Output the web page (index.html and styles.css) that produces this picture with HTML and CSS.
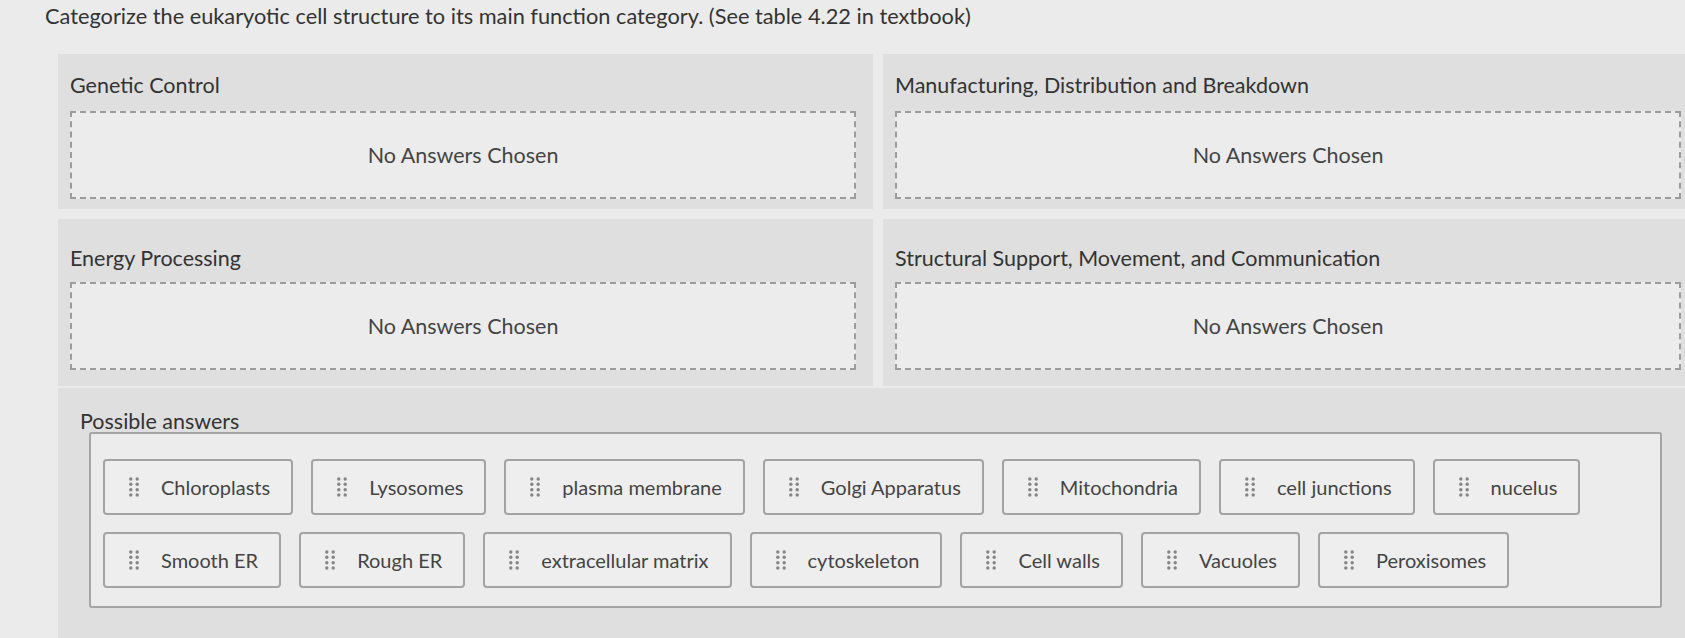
FILE: index.html
```html
<!DOCTYPE html>
<html lang="en">
<head>
<meta charset="utf-8">
<title>Categorize</title>
<link rel="stylesheet" href="styles.css">
</head>
<body>
<div class="page">
  <h1 class="title">Categorize the eukaryotic cell structure to its main function category. (See table 4.22 in textbook)</h1>
  <div class="grid">
    <section class="panel">
      <div class="panel-label">Genetic Control</div>
      <div class="dropzone">No Answers Chosen</div>
    </section>
    <section class="panel">
      <div class="panel-label">Manufacturing, Distribution and Breakdown</div>
      <div class="dropzone">No Answers Chosen</div>
    </section>
    <section class="panel panel-low">
      <div class="panel-label">Energy Processing</div>
      <div class="dropzone">No Answers Chosen</div>
    </section>
    <section class="panel panel-low">
      <div class="panel-label">Structural Support, Movement, and Communication</div>
      <div class="dropzone">No Answers Chosen</div>
    </section>
    <section class="answers">
      <div class="answers-label">Possible answers</div>
      <div class="answers-box">
        <div class="chip"><svg class="grip" viewBox="0 0 10 20"><g fill="#858585"><circle cx="1.8" cy="2" r="1.7"/><circle cx="8.2" cy="2" r="1.7"/><circle cx="1.8" cy="7.3" r="1.7"/><circle cx="8.2" cy="7.3" r="1.7"/><circle cx="1.8" cy="12.7" r="1.7"/><circle cx="8.2" cy="12.7" r="1.7"/><circle cx="1.8" cy="18" r="1.7"/><circle cx="8.2" cy="18" r="1.7"/></g></svg>Chloroplasts</div>
        <div class="chip"><svg class="grip" viewBox="0 0 10 20"><g fill="#858585"><circle cx="1.8" cy="2" r="1.7"/><circle cx="8.2" cy="2" r="1.7"/><circle cx="1.8" cy="7.3" r="1.7"/><circle cx="8.2" cy="7.3" r="1.7"/><circle cx="1.8" cy="12.7" r="1.7"/><circle cx="8.2" cy="12.7" r="1.7"/><circle cx="1.8" cy="18" r="1.7"/><circle cx="8.2" cy="18" r="1.7"/></g></svg>Lysosomes</div>
        <div class="chip"><svg class="grip" viewBox="0 0 10 20"><g fill="#858585"><circle cx="1.8" cy="2" r="1.7"/><circle cx="8.2" cy="2" r="1.7"/><circle cx="1.8" cy="7.3" r="1.7"/><circle cx="8.2" cy="7.3" r="1.7"/><circle cx="1.8" cy="12.7" r="1.7"/><circle cx="8.2" cy="12.7" r="1.7"/><circle cx="1.8" cy="18" r="1.7"/><circle cx="8.2" cy="18" r="1.7"/></g></svg>plasma membrane</div>
        <div class="chip"><svg class="grip" viewBox="0 0 10 20"><g fill="#858585"><circle cx="1.8" cy="2" r="1.7"/><circle cx="8.2" cy="2" r="1.7"/><circle cx="1.8" cy="7.3" r="1.7"/><circle cx="8.2" cy="7.3" r="1.7"/><circle cx="1.8" cy="12.7" r="1.7"/><circle cx="8.2" cy="12.7" r="1.7"/><circle cx="1.8" cy="18" r="1.7"/><circle cx="8.2" cy="18" r="1.7"/></g></svg>Golgi Apparatus</div>
        <div class="chip"><svg class="grip" viewBox="0 0 10 20"><g fill="#858585"><circle cx="1.8" cy="2" r="1.7"/><circle cx="8.2" cy="2" r="1.7"/><circle cx="1.8" cy="7.3" r="1.7"/><circle cx="8.2" cy="7.3" r="1.7"/><circle cx="1.8" cy="12.7" r="1.7"/><circle cx="8.2" cy="12.7" r="1.7"/><circle cx="1.8" cy="18" r="1.7"/><circle cx="8.2" cy="18" r="1.7"/></g></svg>Mitochondria</div>
        <div class="chip"><svg class="grip" viewBox="0 0 10 20"><g fill="#858585"><circle cx="1.8" cy="2" r="1.7"/><circle cx="8.2" cy="2" r="1.7"/><circle cx="1.8" cy="7.3" r="1.7"/><circle cx="8.2" cy="7.3" r="1.7"/><circle cx="1.8" cy="12.7" r="1.7"/><circle cx="8.2" cy="12.7" r="1.7"/><circle cx="1.8" cy="18" r="1.7"/><circle cx="8.2" cy="18" r="1.7"/></g></svg>cell junctions</div>
        <div class="chip"><svg class="grip" viewBox="0 0 10 20"><g fill="#858585"><circle cx="1.8" cy="2" r="1.7"/><circle cx="8.2" cy="2" r="1.7"/><circle cx="1.8" cy="7.3" r="1.7"/><circle cx="8.2" cy="7.3" r="1.7"/><circle cx="1.8" cy="12.7" r="1.7"/><circle cx="8.2" cy="12.7" r="1.7"/><circle cx="1.8" cy="18" r="1.7"/><circle cx="8.2" cy="18" r="1.7"/></g></svg>nucelus</div>
        <div class="chip"><svg class="grip" viewBox="0 0 10 20"><g fill="#858585"><circle cx="1.8" cy="2" r="1.7"/><circle cx="8.2" cy="2" r="1.7"/><circle cx="1.8" cy="7.3" r="1.7"/><circle cx="8.2" cy="7.3" r="1.7"/><circle cx="1.8" cy="12.7" r="1.7"/><circle cx="8.2" cy="12.7" r="1.7"/><circle cx="1.8" cy="18" r="1.7"/><circle cx="8.2" cy="18" r="1.7"/></g></svg>Smooth ER</div>
        <div class="chip"><svg class="grip" viewBox="0 0 10 20"><g fill="#858585"><circle cx="1.8" cy="2" r="1.7"/><circle cx="8.2" cy="2" r="1.7"/><circle cx="1.8" cy="7.3" r="1.7"/><circle cx="8.2" cy="7.3" r="1.7"/><circle cx="1.8" cy="12.7" r="1.7"/><circle cx="8.2" cy="12.7" r="1.7"/><circle cx="1.8" cy="18" r="1.7"/><circle cx="8.2" cy="18" r="1.7"/></g></svg>Rough ER</div>
        <div class="chip"><svg class="grip" viewBox="0 0 10 20"><g fill="#858585"><circle cx="1.8" cy="2" r="1.7"/><circle cx="8.2" cy="2" r="1.7"/><circle cx="1.8" cy="7.3" r="1.7"/><circle cx="8.2" cy="7.3" r="1.7"/><circle cx="1.8" cy="12.7" r="1.7"/><circle cx="8.2" cy="12.7" r="1.7"/><circle cx="1.8" cy="18" r="1.7"/><circle cx="8.2" cy="18" r="1.7"/></g></svg>extracellular matrix</div>
        <div class="chip"><svg class="grip" viewBox="0 0 10 20"><g fill="#858585"><circle cx="1.8" cy="2" r="1.7"/><circle cx="8.2" cy="2" r="1.7"/><circle cx="1.8" cy="7.3" r="1.7"/><circle cx="8.2" cy="7.3" r="1.7"/><circle cx="1.8" cy="12.7" r="1.7"/><circle cx="8.2" cy="12.7" r="1.7"/><circle cx="1.8" cy="18" r="1.7"/><circle cx="8.2" cy="18" r="1.7"/></g></svg>cytoskeleton</div>
        <div class="chip"><svg class="grip" viewBox="0 0 10 20"><g fill="#858585"><circle cx="1.8" cy="2" r="1.7"/><circle cx="8.2" cy="2" r="1.7"/><circle cx="1.8" cy="7.3" r="1.7"/><circle cx="8.2" cy="7.3" r="1.7"/><circle cx="1.8" cy="12.7" r="1.7"/><circle cx="8.2" cy="12.7" r="1.7"/><circle cx="1.8" cy="18" r="1.7"/><circle cx="8.2" cy="18" r="1.7"/></g></svg>Cell walls</div>
        <div class="chip"><svg class="grip" viewBox="0 0 10 20"><g fill="#858585"><circle cx="1.8" cy="2" r="1.7"/><circle cx="8.2" cy="2" r="1.7"/><circle cx="1.8" cy="7.3" r="1.7"/><circle cx="8.2" cy="7.3" r="1.7"/><circle cx="1.8" cy="12.7" r="1.7"/><circle cx="8.2" cy="12.7" r="1.7"/><circle cx="1.8" cy="18" r="1.7"/><circle cx="8.2" cy="18" r="1.7"/></g></svg>Vacuoles</div>
        <div class="chip"><svg class="grip" viewBox="0 0 10 20"><g fill="#858585"><circle cx="1.8" cy="2" r="1.7"/><circle cx="8.2" cy="2" r="1.7"/><circle cx="1.8" cy="7.3" r="1.7"/><circle cx="8.2" cy="7.3" r="1.7"/><circle cx="1.8" cy="12.7" r="1.7"/><circle cx="8.2" cy="12.7" r="1.7"/><circle cx="1.8" cy="18" r="1.7"/><circle cx="8.2" cy="18" r="1.7"/></g></svg>Peroxisomes</div>
      </div>
    </section>
  </div>
</div>
</body>
</html>
```

FILE: styles.css
```css
html, body {
  margin: 0;
  padding: 0;
  background: #ebebeb;
  overflow: hidden;
}

body {
  font-family: Lato, "Open Sans", "Liberation Sans", sans-serif;
  color: #3a3a3a;
  width: 1685px;
  height: 638px;
}

.page {
  padding: 3px 0 0 45px;
}

.title {
  margin: 0 0 24px 0;
  font-size: 21.75px;
  line-height: 27px;
  font-weight: 400;
  color: #333;
  white-space: nowrap;
}

.grid {
  margin-left: 13px;
  display: grid;
  grid-template-columns: 815px 815px;
  column-gap: 10px;
  row-gap: 10px;
  width: 1640px;
}

.panel {
  background: #dfdfdf;
  padding: 18px 17px 10px 12px;
}

.panel-low {
  padding-top: 26px;
  padding-bottom: 16px;
}

.panel-low .panel-label {
  margin-bottom: 11px;
}

.panel-label {
  font-size: 21.5px;
  line-height: 26px;
  color: #333;
  margin-bottom: 13px;
}

.dropzone {
  height: 84px;
  border: 2px dashed #9c9c9c;
  background: #ececec;
  display: flex;
  align-items: center;
  justify-content: center;
  font-size: 21.5px;
  color: #444;
}

.answers {
  grid-column: 1 / span 2;
  background: #dfdfdf;
  margin-top: -8px;
  padding: 20px 0 40px 22px;
}

.answers-label {
  font-size: 21.5px;
  line-height: 26px;
  margin-bottom: -2px;
  color: #333;
}

.answers-box {
  margin-left: 9px;
  width: 1573px;
  border: 2px solid #a5a5a5;
  border-radius: 3px;
  background: #ececec;
  padding: 25px 12px 18px 12px;
  display: flex;
  flex-wrap: wrap;
  column-gap: 18px;
  row-gap: 17px;
  box-sizing: border-box;
}

.chip {
  display: flex;
  align-items: center;
  height: 56px;
  box-sizing: border-box;
  border: 2px solid #a3a3a3;
  border-radius: 4px;
  background: #eeeeee;
  padding: 0 21px 0 24px;
  font-size: 20px;
  color: #444;
}

.grip {
  width: 10px;
  height: 20px;
  margin-right: 22px;
  flex: none;
}
```
